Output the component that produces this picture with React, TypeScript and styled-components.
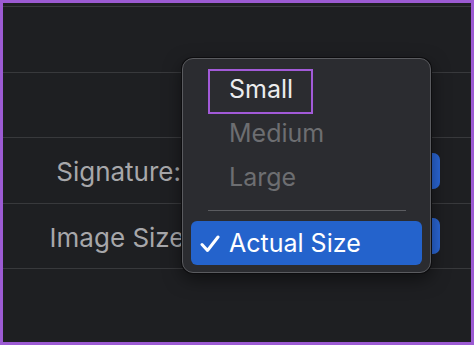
import React from "react";
import styled, { createGlobalStyle } from "styled-components";

const Global = createGlobalStyle`
  html, body { margin: 0; padding: 0; background: #1e1f22; }
  body { width: 474px; height: 345px; overflow: hidden; font-family: Inter, "Liberation Sans", sans-serif; }
`;

const Frame = styled.div`
  position: relative;
  box-sizing: border-box;
  width: 474px;
  height: 345px;
  border: 3px solid #9c5bd3;
  background: #1e1f22;
  display: flex;
  flex-direction: column;
  padding-top: 3px;
  overflow: hidden;
`;

const Row = styled.div<{ $h: number }>`
  box-sizing: border-box;
  height: ${(p) => p.$h}px;
  border-top: 1px solid #38393c;
  display: flex;
  align-items: center;
  flex-shrink: 0;
`;

const Label = styled.div<{ $overhang: number }>`
  box-sizing: border-box;
  width: ${(p) => 178 + p.$overhang}px;
  margin-right: ${(p) => -p.$overhang}px;
  text-align: right;
  font-size: 26px;
  color: #a7a7aa;
  white-space: nowrap;
  margin-top: 2px;
`;

const Popup = styled.div`
  margin-left: auto;
  margin-right: 31px;
  width: 150px;
  height: 36px;
  border-radius: 7px;
  background: #3a3b3f;
  display: flex;
  justify-content: flex-end;
  overflow: hidden;
`;

const PopupArrow = styled.div`
  width: 20px;
  background: #2a66d6;
  border-left: 1px solid #1d4fa8;
`;

const Menu = styled.div`
  position: absolute;
  left: 179px;
  top: 55px;
  width: 249px;
  box-sizing: border-box;
  border-radius: 11px;
  background: #2b2c30;
  border: 1px solid #5a5b5f;
  box-shadow: 0 0 0 1px #0d0d0f, 0 6px 18px rgba(0, 0, 0, 0.5);
  padding: 8px 8px 7px 8px;
  display: flex;
  flex-direction: column;
`;

const Item = styled.div<{ $dim?: boolean; $active?: boolean }>`
  position: relative;
  height: 44px;
  flex-shrink: 0;
  display: flex;
  align-items: center;
  padding-left: 38px;
  font-size: 25px;
  color: ${(p) => (p.$active ? "#ffffff" : p.$dim ? "#6d6e71" : "#ececee")};
  background: ${(p) => (p.$active ? "#2463cc" : "transparent")};
  border-radius: 6px;
  white-space: nowrap;
`;

const Separator = styled.div`
  height: 1px;
  flex-shrink: 0;
  background: #5b5c60;
  margin: 11px 16px 10px 17px;
`;

const Highlight = styled.div`
  position: absolute;
  left: 17px;
  top: 2px;
  width: 101px;
  height: 41px;
  border: 2px solid #a25ad8;
`;

const Check = styled.svg`
  position: absolute;
  left: 9px;
  top: 14px;
`;

export default function App() {
  return (
    <>
      <Global />
      <Frame>
        <Row $h={66} />
        <Row $h={65} />
        <Row $h={66}>
          <Label $overhang={0}>Signature:</Label>
          <Popup>
            <PopupArrow />
          </Popup>
        </Row>
        <Row $h={65}>
          <Label $overhang={11}>Image Size:</Label>
          <Popup>
            <PopupArrow />
          </Popup>
        </Row>
        <Row $h={80} />
        <Menu>
          <Item>
            Small
            <Highlight />
          </Item>
          <Item $dim>Medium</Item>
          <Item $dim>Large</Item>
          <Separator />
          <Item $active>
            <Check width="20" height="18" viewBox="0 0 20 18">
              <path d="M2 9.5 L7.5 15.5 L18 2" fill="none" stroke="#ffffff" strokeWidth="3" strokeLinecap="round" strokeLinejoin="round" />
            </Check>
            Actual Size
          </Item>
        </Menu>
      </Frame>
    </>
  );
}
